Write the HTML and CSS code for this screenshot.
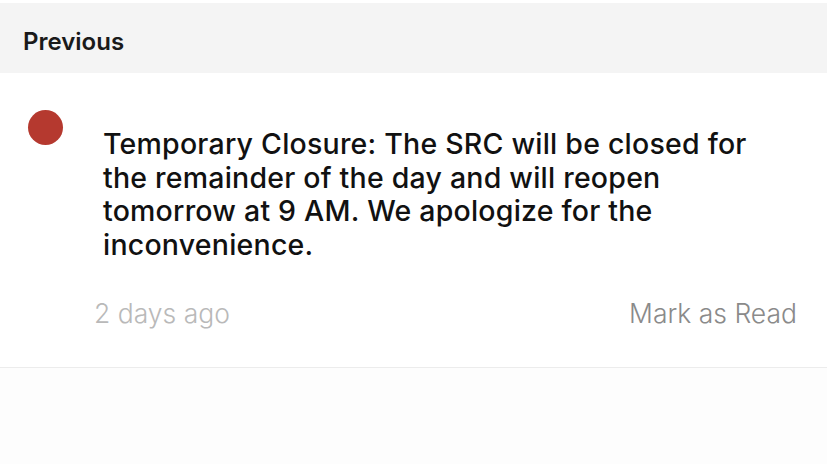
FILE: index.html
```html
<!DOCTYPE html>
<html lang="en">
<head>
<meta charset="utf-8">
<link rel="stylesheet" href="styles.css">
</head>
<body>
<div class="page">
  <div class="section-header">Previous</div>
  <div class="notice">
    <div class="notice-main">
      <span class="dot"></span>
      <p class="message">Temporary Closure: The SRC will be closed for the remainder of the day and will reopen tomorrow at 9 AM. We apologize for the inconvenience.</p>
    </div>
    <div class="notice-foot">
      <span class="time">2 days ago</span>
      <span class="action">Mark as Read</span>
    </div>
  </div>
  <div class="rest"></div>
</div>
</body>
</html>
```

FILE: styles.css
```css
html, body {
  margin: 0;
  padding: 0;
  background: #ffffff;
}
.page {
  width: 827px;
  height: 464px;
  overflow: hidden;
  padding-top: 3px;
  box-sizing: border-box;
  font-family: Inter, "Noto Sans", sans-serif;
  display: flex;
  flex-direction: column;
}
.section-header {
  flex: none;
  background: #f4f4f4;
  height: 70px;
  display: flex;
  align-items: center;
  padding-left: 23px;
  padding-top: 6px;
  font-size: 24px;
  font-weight: 600;
  color: #1a1a1a;
  box-sizing: border-box;
}
.notice {
  flex: none;
  border-bottom: 1px solid #ececec;
  padding: 37px 30px 0 28px;
  height: 295px;
  box-sizing: border-box;
}
.notice-main {
  display: flex;
  align-items: flex-start;
}
.dot {
  flex: none;
  width: 35px;
  height: 35px;
  border-radius: 50%;
  background: #b5392f;
  margin-right: 40px;
}
.message {
  margin: 17px 0 0 0;
  font-size: 28.5px;
  line-height: 33.5px;
  font-weight: 500;
  letter-spacing: 0.22px;
  color: #111111;
  max-width: 670px;
}
.notice-foot {
  display: flex;
  justify-content: space-between;
  align-items: center;
  margin-top: 36px;
  padding-left: 66px;
  font-size: 26.5px;
  line-height: 32px;
  font-weight: 300;
}
.time {
  color: #b9b9b9;
}
.action {
  color: #8a8a8a;
}
.rest {
  flex: 1;
  background: #fdfdfd;
}
```
